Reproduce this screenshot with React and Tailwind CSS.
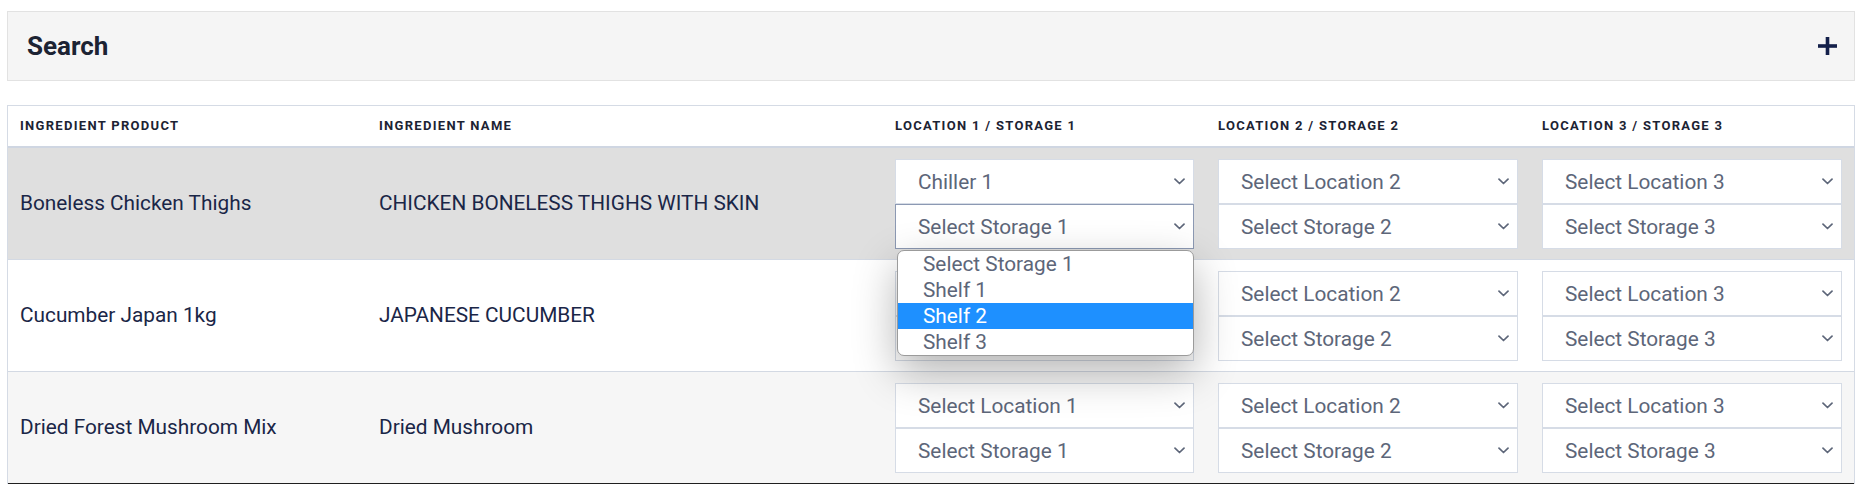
import React from "react";

const Chevron = () => (
  <svg width="11" height="7" viewBox="0 0 11 7" fill="none" className="shrink-0">
    <path d="M1 1.2l4.5 4.3L10 1.2" stroke="#5d6679" strokeWidth="1.7" strokeLinecap="round" strokeLinejoin="round" />
  </svg>
);

const Select = ({ label, focused, children }) => (
  <div
    className={
      "relative h-[45px] w-full bg-white border flex items-center justify-between pl-[22px] pr-[8px] text-[20.8px] text-[#5d6679] " +
      (focused ? "border-[#8c99b3]" : "border-[#d6dce6]")
    }
  >
    <span className="leading-none pt-[1px]">{label}</span>
    <Chevron />
    {children}
  </div>
);

const Popup = () => {
  const opts = ["Select Storage 1", "Shelf 1", "Shelf 2", "Shelf 3"];
  return (
    <div className="absolute z-20 left-[1px] top-[calc(100%+2px)] w-[297px] bg-white border border-[#9b9b9b] rounded-[7px] overflow-hidden shadow-[0_16px_44px_rgba(0,0,0,0.3)]">
      {opts.map((o, i) => (
        <div
          key={o}
          className={
            "h-[26px] flex items-center pl-[25px] text-[20.8px] leading-none " +
            (i === 2 ? "bg-[#1e90ff] text-white" : "text-[#5d6679]")
          }
        >
          {o}
        </div>
      ))}
    </div>
  );
};

const rows = [
  {
    product: "Boneless Chicken Thighs",
    name: "CHICKEN BONELESS THIGHS WITH SKIN",
    bg: "bg-[#dfdfdf]",
    loc1: "Chiller 1",
    open: true,
  },
  {
    product: "Cucumber Japan 1kg",
    name: "JAPANESE CUCUMBER",
    bg: "bg-white",
    loc1: "Select Location 1",
  },
  {
    product: "Dried Forest Mushroom Mix",
    name: "Dried Mushroom",
    bg: "bg-[#f6f6f6]",
    loc1: "Select Location 1",
    last: true,
  },
];

const grid = "grid grid-cols-[359px_516px_323px_324px_324px]";

export default function App() {
  return (
    <div className="w-[1867px] h-[495px] bg-white pt-[11px] pl-[7px] font-['Roboto',_'Liberation_Sans',_sans-serif]">
      <div className="w-[1848px] h-[70px] bg-[#f5f5f5] border border-[#e2e2e2] flex items-center justify-between pl-[19px] pr-[17px]">
        <h2 className="text-[26px] font-bold text-[#1c2333] leading-none">Search</h2>
        <svg width="19" height="18" viewBox="0 0 19 18">
          <rect x="0" y="7.2" width="19" height="3.6" fill="#14204a" />
          <rect x="7.7" y="0" width="3.6" height="18" fill="#14204a" />
        </svg>
      </div>

      <div className="mt-[24px] w-[1848px] border-x border-t border-[#d5dbe5]">
        <div className={grid + " h-[42px] items-center border-b-2 border-[#cfd6e2] bg-white text-[13px] font-bold tracking-[0.1em] text-[#1c2333]"}>
          <div className="px-3">INGREDIENT PRODUCT</div>
          <div className="px-3">INGREDIENT NAME</div>
          <div className="px-3">LOCATION 1 / STORAGE 1</div>
          <div className="px-3">LOCATION 2 / STORAGE 2</div>
          <div className="px-3">LOCATION 3 / STORAGE 3</div>
        </div>

        {rows.map((r) => (
          <div
            key={r.product}
            className={
              grid +
              " items-center pt-[11px] pb-[10px] border-b " +
              r.bg +
              " " +
              (r.last ? "border-[#1f1f1f]" : "border-[#d3d9e3]")
            }
          >
            <div className="px-3 text-[20.8px] text-[#1a2647]">{r.product}</div>
            <div className="px-3 text-[20.8px] text-[#1a2647]">{r.name}</div>
            <div className="px-3 flex flex-col">
              <Select label={r.loc1} />
              <Select label="Select Storage 1" focused={r.open}>
                {r.open && <Popup />}
              </Select>
            </div>
            <div className="px-3 flex flex-col">
              <Select label="Select Location 2" />
              <Select label="Select Storage 2" />
            </div>
            <div className="px-3 flex flex-col">
              <Select label="Select Location 3" />
              <Select label="Select Storage 3" />
            </div>
          </div>
        ))}
      </div>
    </div>
  );
}
